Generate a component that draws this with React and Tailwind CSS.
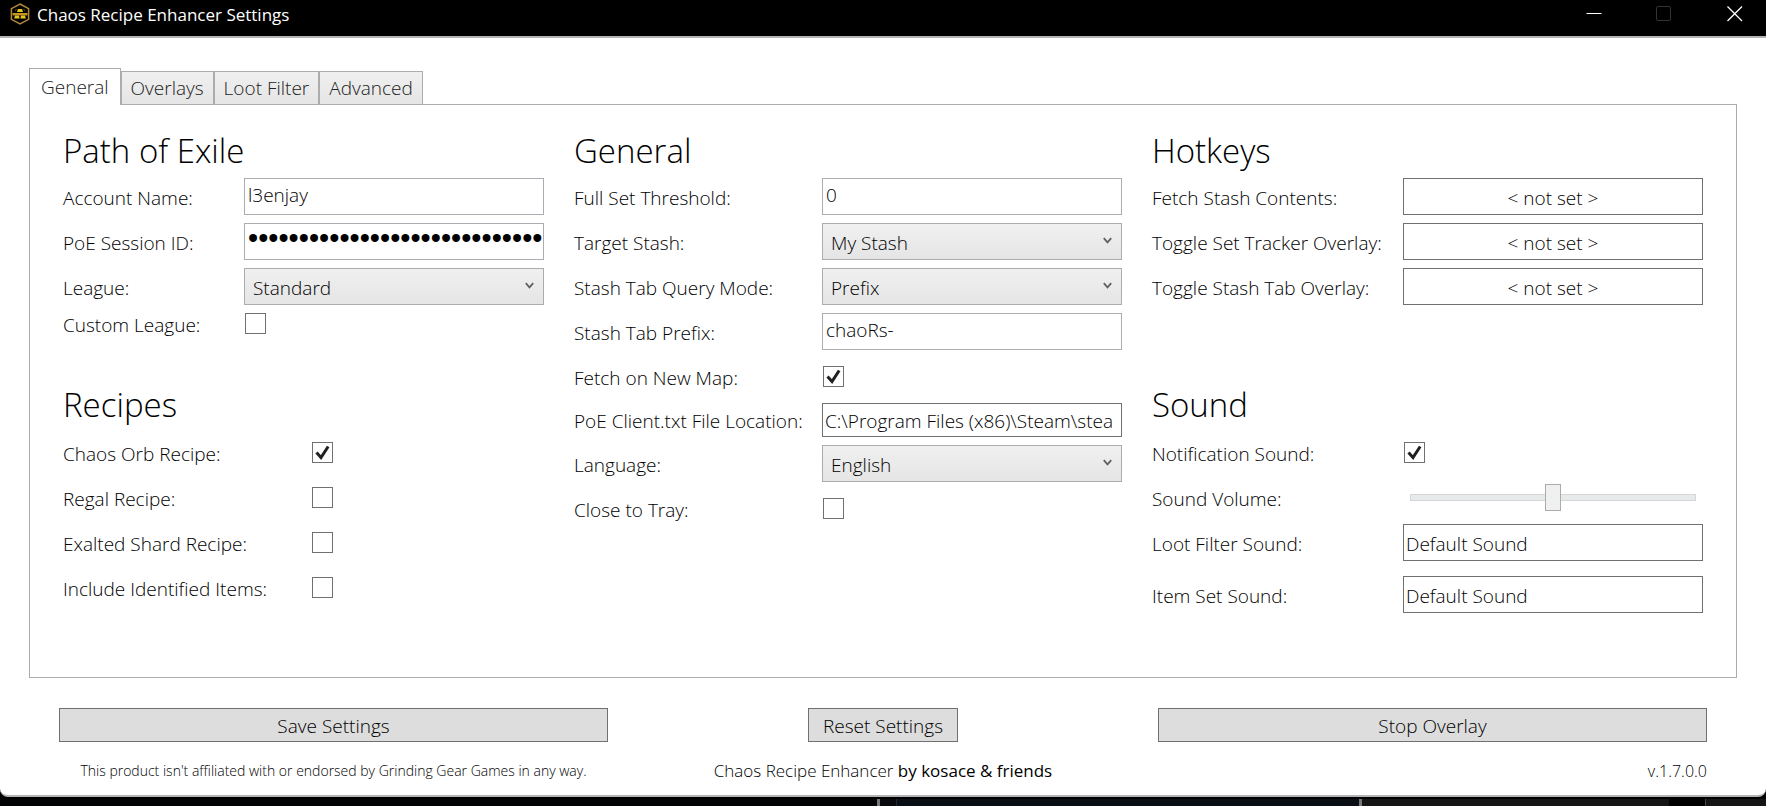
import { useState } from "react";

const TABS = ["General", "Overlays", "Loot Filter", "Advanced"];

function LogoIcon() {
  return (
    <svg width="20" height="22" viewBox="0 0 20 22" fill="none" aria-hidden="true">
      <path d="M10 1 L18.6 5.6 V16.4 L10 21 L1.4 16.4 V5.6 Z" stroke="#b5873c" strokeWidth="1.5" />
      <path d="M8 6 H12 L13 9 H7 Z" fill="#e6c619" />
      <path d="M2.5 10 H17.5 V12.4 H2.5 Z" fill="#c9951c" />
      <path d="M5 12.4 H9 L9.6 15.4 H4.2 Z M11 12.4 H15 L15.8 15.4 H10.4 Z" fill="#e6c619" />
      <path d="M5 7.5 L6.5 6.5 M13.5 6.5 L15 7.5" stroke="#8a6a22" />
    </svg>
  );
}

function TitleBar() {
  return (
    <header className="flex h-9 items-start justify-between bg-black pl-2.5 text-white">
      <div className="flex items-center gap-[7px] pt-0.5">
        <LogoIcon />
        <h1 className="pt-0.5 text-[17px] leading-[22px]">Chaos Recipe Enhancer Settings</h1>
      </div>
      <div className="flex">
        <button type="button" aria-label="Minimize" className="flex h-7 w-[60px] items-center justify-center">
          <svg width="16" height="16" viewBox="0 0 16 16" aria-hidden="true">
            <path d="M0.5 7.5 H15.5" stroke="#fff" />
          </svg>
        </button>
        <button type="button" aria-label="Maximize" disabled className="flex h-7 w-20 items-center justify-center">
          <svg width="16" height="16" viewBox="0 0 16 16" fill="none" aria-hidden="true">
            <rect x="0.5" y="0.5" width="14" height="14" rx="1.5" stroke="#333" />
          </svg>
        </button>
        <button type="button" aria-label="Close" className="flex h-7 w-[62px] items-center justify-center">
          <svg width="16" height="16" viewBox="0 0 16 16" aria-hidden="true">
            <path d="M0.5 0.5 L15 15 M15 0.5 L0.5 15" stroke="#fff" strokeWidth="1.3" />
          </svg>
        </button>
      </div>
    </header>
  );
}

function Heading({ children }) {
  return <h2 className="h-12 text-[33px] leading-[50px] font-light">{children}</h2>;
}

function Row({ id, label, children }) {
  return (
    <div className="grid h-[37px] grid-cols-[1fr_300px] items-center">
      <label htmlFor={id} className="pt-[3px] whitespace-nowrap">{label}</label>
      {children}
    </div>
  );
}

function RecipeRow({ id, label, checked }) {
  return (
    <div className="grid h-[37px] grid-cols-[248px_1fr] items-center">
      <label htmlFor={id} className="pt-[3px] whitespace-nowrap">{label}</label>
      <CheckBox id={id} checked={checked} />
    </div>
  );
}

function TextBox({ id, value }) {
  return (
    <input
      id={id}
      type="text"
      defaultValue={value}
      className="h-[37px] w-full min-w-0 border border-[#abadb3] bg-white pb-1 pl-[3px] font-light outline-none focus:border-[#569de5]"
    />
  );
}

function PasswordBox({ id, value }) {
  return (
    <input
      id={id}
      type="password"
      defaultValue={value}
      className="h-[37px] w-full min-w-0 border border-[#abadb3] bg-white pb-1.5 pl-[3px] font-['Liberation_Sans',sans-serif] text-[29px] outline-none focus:border-[#569de5]"
    />
  );
}

function Dropdown({ id, options }) {
  return (
    <div className="relative">
      <select
        id={id}
        className="block h-[37px] w-full appearance-none border border-[#acacac] bg-linear-to-b from-[#f0f0f0] to-[#e5e5e5] pt-[3px] pl-2 font-light outline-none"
      >
        {options.map(o => <option key={o}>{o}</option>)}
      </select>
      <svg className="pointer-events-none absolute top-[14px] right-2.5" width="9" height="8" viewBox="0 0 9 8" fill="none" aria-hidden="true">
        <path d="M0.8 1.2 L4.5 5.4 L8.2 1.2" stroke="#606060" strokeWidth="1.8" />
      </svg>
    </div>
  );
}

function CheckBox({ id, checked = false }) {
  return (
    <span className="relative ml-px block size-[21px]">
      <input
        id={id}
        type="checkbox"
        defaultChecked={checked}
        className="peer block size-[21px] appearance-none border border-[#707070] bg-white"
      />
      <svg className="pointer-events-none invisible absolute inset-0 peer-checked:visible" width="21" height="21" viewBox="0 0 21 21" fill="none" aria-hidden="true">
        <path d="M4.5 10.5 L9 15.5 L16.2 4.5" stroke="#212121" strokeWidth="3" />
      </svg>
    </span>
  );
}

function BoxButton({ id, center, children }) {
  return (
    <button
      id={id}
      type="button"
      className={`h-full w-full min-w-0 overflow-hidden border border-[#707070] bg-white px-0.5 pt-[3px] font-light whitespace-nowrap ${center ? "text-center" : "text-left"}`}
    >
      {children}
    </button>
  );
}

function FooterButton({ children }) {
  return (
    <button type="button" className="h-[34px] border border-[#707070] bg-[#dddddd] pt-0.5 font-light hover:bg-[#bee6fd]">
      {children}
    </button>
  );
}

function GeneralTab() {
  const [volume, setVolume] = useState(50);

  return (
    <div className="grid grid-cols-[481fr_548fr_551fr] gap-[30px]">
      <div>
        <section>
          <Heading>Path of Exile</Heading>
          <div className="mt-1 flex flex-col gap-2">
            <Row id="account" label="Account Name:"><TextBox id="account" value="l3enjay" /></Row>
            <Row id="session" label="PoE Session ID:">
              <PasswordBox id="session" value="0123456789abcdef0123456789abcdef" />
            </Row>
            <Row id="league" label="League:"><Dropdown id="league" options={["Standard", "Hardcore"]} /></Row>
          </div>
          <Row id="custom-league" label="Custom League:"><CheckBox id="custom-league" /></Row>
        </section>
        <section className="mt-[38px]">
          <Heading>Recipes</Heading>
          <div className="mt-1.5 flex flex-col gap-2">
            <RecipeRow id="chaos" label="Chaos Orb Recipe:" checked />
            <RecipeRow id="regal" label="Regal Recipe:" />
            <RecipeRow id="exalted" label="Exalted Shard Recipe:" />
            <RecipeRow id="identified" label="Include Identified Items:" />
          </div>
        </section>
      </div>

      <section>
        <Heading>General</Heading>
        <div className="mt-1 flex flex-col gap-2">
          <Row id="threshold" label="Full Set Threshold:"><TextBox id="threshold" value="0" /></Row>
          <Row id="stash" label="Target Stash:"><Dropdown id="stash" options={["My Stash", "Guild Stash"]} /></Row>
          <Row id="query" label="Stash Tab Query Mode:"><Dropdown id="query" options={["Prefix", "ID", "Suffix"]} /></Row>
          <Row id="prefix" label="Stash Tab Prefix:"><TextBox id="prefix" value="chaoRs-" /></Row>
          <Row id="fetch-map" label="Fetch on New Map:"><CheckBox id="fetch-map" checked /></Row>
          <div className="grid h-[34px] grid-cols-[1fr_300px] items-center">
            <label htmlFor="client" className="pt-[3px] whitespace-nowrap">PoE Client.txt File Location:</label>
            <BoxButton id="client">C:\Program Files (x86)\Steam\stea</BoxButton>
          </div>
          <Row id="language" label="Language:"><Dropdown id="language" options={["English", "French", "German"]} /></Row>
          <Row id="tray" label="Close to Tray:"><CheckBox id="tray" /></Row>
        </div>
      </section>

      <div>
        <section>
          <Heading>Hotkeys</Heading>
          <div className="mt-1 flex flex-col gap-2">
            <Row id="hk-fetch" label="Fetch Stash Contents:"><BoxButton id="hk-fetch" center>&lt; not set &gt;</BoxButton></Row>
            <Row id="hk-set" label="Toggle Set Tracker Overlay:"><BoxButton id="hk-set" center>&lt; not set &gt;</BoxButton></Row>
            <Row id="hk-tab" label="Toggle Stash Tab Overlay:"><BoxButton id="hk-tab" center>&lt; not set &gt;</BoxButton></Row>
          </div>
        </section>
        <section className="mt-[75px]">
          <Heading>Sound</Heading>
          <div className="mt-1.5 flex flex-col gap-2">
            <Row id="notify" label="Notification Sound:"><CheckBox id="notify" checked /></Row>
            <Row id="volume" label="Sound Volume:">
              <div className="px-[7px]">
                <input
                  id="volume"
                  type="range"
                  value={volume}
                  onChange={e => setVolume(Number(e.target.value))}
                  className="block h-[27px] w-full appearance-none bg-transparent [&::-webkit-slider-runnable-track]:h-[7px] [&::-webkit-slider-runnable-track]:border [&::-webkit-slider-runnable-track]:border-[#d6d6d6] [&::-webkit-slider-runnable-track]:bg-[#e7eaea] [&::-webkit-slider-thumb]:-mt-[11px] [&::-webkit-slider-thumb]:h-[27px] [&::-webkit-slider-thumb]:w-4 [&::-webkit-slider-thumb]:appearance-none [&::-webkit-slider-thumb]:border [&::-webkit-slider-thumb]:border-[#acacac] [&::-webkit-slider-thumb]:bg-[#f0f0f0]"
                />
              </div>
            </Row>
            <Row id="loot-sound" label="Loot Filter Sound:"><BoxButton id="loot-sound">Default Sound</BoxButton></Row>
          </div>
          <div className="mt-[15px]">
            <Row id="set-sound" label="Item Set Sound:"><BoxButton id="set-sound">Default Sound</BoxButton></Row>
          </div>
        </section>
      </div>
    </div>
  );
}

export default function App() {
  const [tab, setTab] = useState("General");

  return (
    <div className="flex min-h-screen flex-col bg-black font-['Open_Sans','Noto_Sans',sans-serif] text-[19px] text-black">
      <TitleBar />
      <main className="flex flex-1 flex-col rounded-b-lg border-y-2 border-[#b4b4b4] bg-white font-light">
        <div className="flex flex-1 flex-col px-[29px] pt-[30px]">
          <div role="tablist" className="flex items-end">
            {TABS.map(t => (
              <button
                key={t}
                type="button"
                role="tab"
                aria-selected={t === tab}
                onClick={() => setTab(t)}
                className={t === tab
                  ? "z-10 -mb-px h-[37px] border border-b-0 border-[#acacac] bg-white px-[11px] text-[#212121]"
                  : "h-[33px] border border-b-0 border-[#acacac] bg-linear-to-b from-[#f0f0f0] to-[#e5e5e5] px-[9px] pt-px text-[#212121]"}
              >
                {t}
              </button>
            ))}
          </div>
          <div role="tabpanel" className="flex-1 border border-[#acacac] px-[33px] pt-[21px]">
            {tab === "General" && <GeneralTab />}
          </div>
        </div>

        <footer className="px-[59px] pt-[30px] pb-3">
          <div className="grid grid-cols-[549fr_150px_549fr] gap-[200px]">
            <FooterButton>Save Settings</FooterButton>
            <FooterButton>Reset Settings</FooterButton>
            <FooterButton>Stop Overlay</FooterButton>
          </div>
          <div className="mt-[17px] grid grid-cols-[549fr_550px_549fr] items-center text-[17px] leading-6">
            <p className="text-center text-[14px]">This product isn't affiliated with or endorsed by Grinding Gear Games in any way.</p>
            <p className="text-center">Chaos Recipe Enhancer <span className="font-normal">by kosace &amp; friends</span></p>
            <p className="text-right text-[16px]">v.1.7.0.0</p>
          </div>
        </footer>
      </main>
      {/* sliver of the desktop below the window */}
      <div className="grid h-[9px] grid-cols-[877fr_3px_17fr_462fr_3px_307fr_36fr_61fr] bg-black pt-0.5">
        <div className="bg-[#020305]" />
        <div className="bg-[#777]" />
        <div className="border-r border-[#222831] bg-[#07090d]" />
        <div className="bg-[#090d14]" />
        <div className="bg-[#777]" />
        <div className="bg-[#141414]" />
        <div className="bg-black" />
        <div className="border-l border-[#444] bg-[#141414]" />
      </div>
    </div>
  );
}
